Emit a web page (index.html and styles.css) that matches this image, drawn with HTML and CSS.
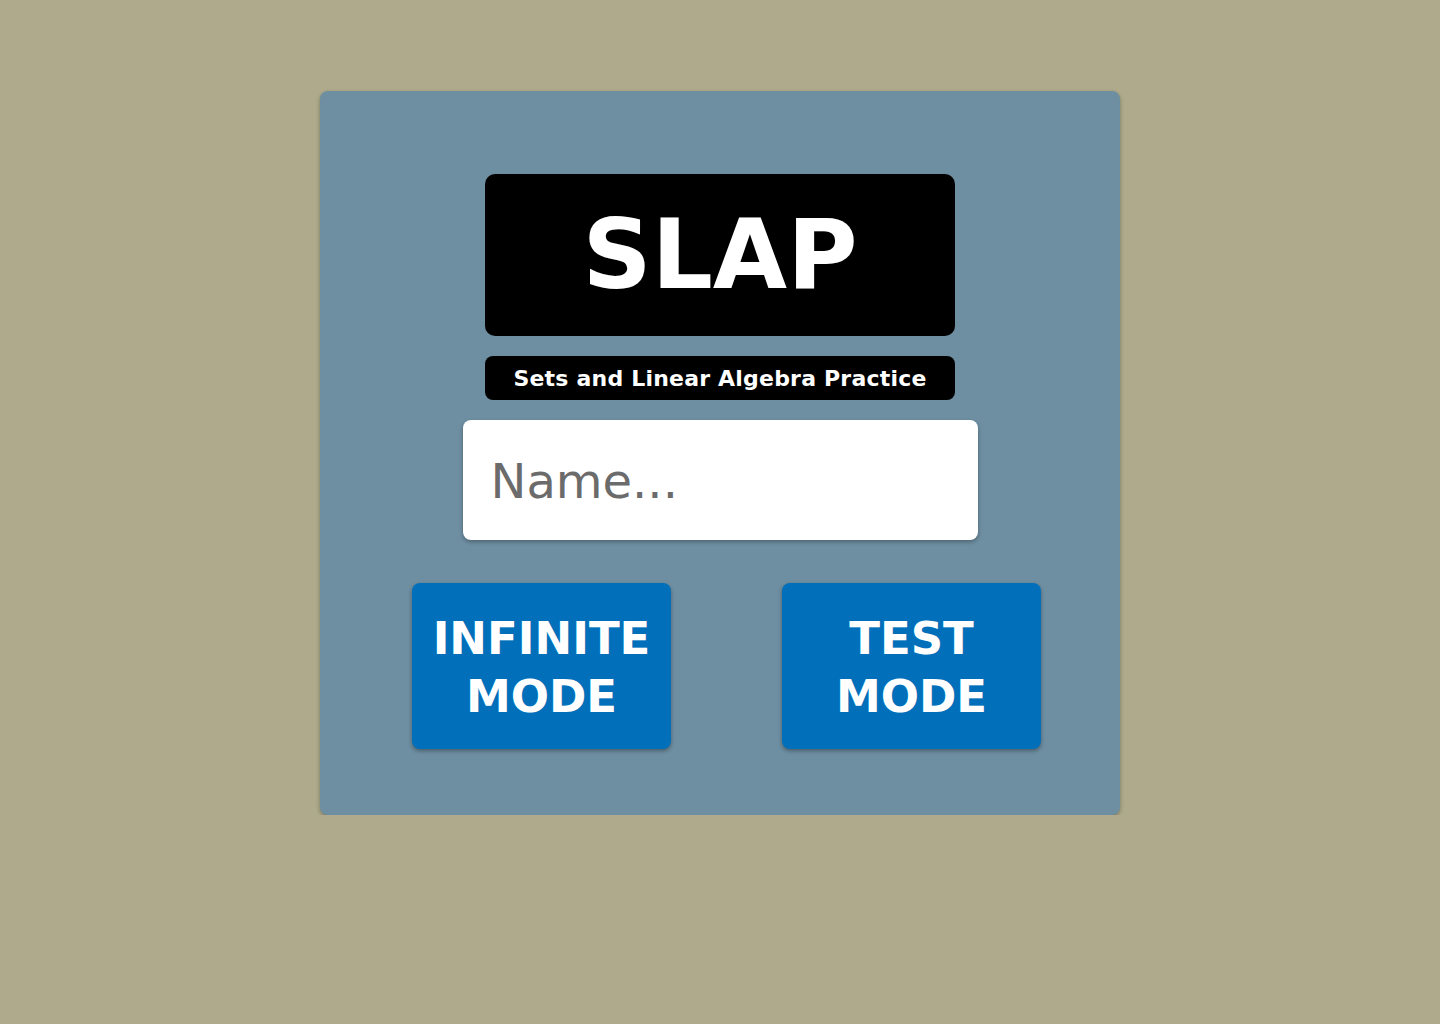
FILE: index.html
```html
<!DOCTYPE html>
<html lang="en">
<head>
  <meta charset="UTF-8">
  <title>SLAP</title>
  <link rel="stylesheet" href="styles.css">
</head>
<body>

<div class="menu">
  <div class="logo">SLAP</div>
  <div class="subtitle">Sets and Linear Algebra Practice</div>
  <input type="text" class="name" placeholder="Name...">
  <div class="modes">
    <button class="mode">INFINITE<br>MODE</button>
    <button class="mode">TEST<br>MODE</button>
  </div>
</div>

</body>
</html>
```

FILE: styles.css
```css
body { margin: 0; background: #aeaa8b; font-family: "DejaVu Sans", sans-serif; }
.menu { width: 800px; height: 724px; margin: 91px auto 0; box-sizing: border-box; padding-top: 83px; background: #6e8fa2; border-radius: 8px; box-shadow: 0 2px 4px rgba(0,0,0,.3); display: flex; flex-direction: column; align-items: center; }
.logo { width: 470px; height: 162px; background: #000; color: #fff; border-radius: 10px; display: flex; align-items: center; justify-content: center; font-size: 96px; font-weight: 900; letter-spacing: 0; }
.subtitle { width: 470px; height: 44px; margin-top: 20px; background: #000; color: #fff; border-radius: 8px; display: flex; align-items: center; justify-content: center; font-size: 22px; font-weight: bold; letter-spacing: 0.2px; }
.name { width: 515px; height: 120px; margin-top: 20px; box-sizing: border-box; border: none; border-radius: 8px; padding: 2px 28px 0; font-family: "DejaVu Sans", sans-serif; font-size: 48px; color: #333; box-shadow: 0 2px 4px rgba(0,0,0,.3); outline: none; }
.name::placeholder { color: #6b6b6b; }
.modes { display: flex; gap: 111px; margin-top: 43px; margin-left: 13px; }
.mode { width: 259px; height: 166px; background: #016fba; color: #fff; border: none; border-radius: 8px; box-shadow: 0 2px 4px rgba(0,0,0,.35); font-family: "DejaVu Sans", sans-serif; font-size: 45px; font-weight: bold; line-height: 58px; padding: 3px 0 0; cursor: pointer; }
```
